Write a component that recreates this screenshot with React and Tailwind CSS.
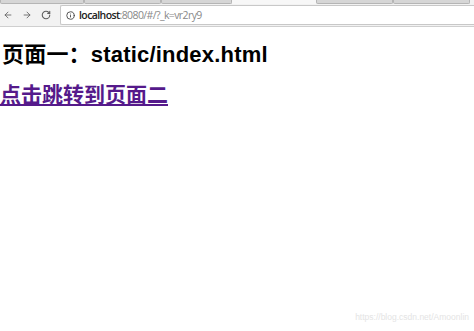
import { ArrowLeft, ArrowRight, RotateCw, Info } from "lucide-react"

const tabs = [
  { w: "w-[84px]", active: false },
  { w: "w-[77px]", active: false },
  { w: "w-[71px]", active: false },
  { w: "w-[84px]", active: true },
  { w: "w-[77px]", active: false },
  { w: "w-[77px]", active: false },
]

const App = () => {
  return (
    <div className="w-[474px] h-[331px] bg-white overflow-hidden relative font-['Liberation_Sans','Noto_Sans_CJK_SC',sans-serif]">
      {/* tab strip */}
      <div className="flex h-[4px] bg-[#f2f2f2]">
        {tabs.map((t, i) => (
          <div
            key={i}
            className={
              t.active
                ? `${t.w} shrink-0 bg-[#f7f7f7]`
                : `${t.w} shrink-0 bg-[#d6d6d6] border-x border-b border-[#b5b5b5] rounded-b-[2px]`
            }
          />
        ))}
      </div>

      {/* toolbar */}
      <div className="flex items-center h-[23px] bg-[#f2f2f2] border-b border-[#cfcfcf]">
        <div className="flex items-center gap-[9px] pl-[3px] text-[#5e5e5e]">
          <ArrowLeft className="w-[10px] h-[10px]" strokeWidth={2} />
          <ArrowRight className="w-[10px] h-[10px]" strokeWidth={2} />
          <RotateCw className="w-[10px] h-[10px]" strokeWidth={2.6} />
        </div>
        <div className="ml-[9px] flex-1 h-[20px] bg-white border border-[#c8c8c8] border-r-0 rounded-l-[2px] flex items-center pl-[5px] gap-[4px]">
          <Info className="w-[9px] h-[9px] text-[#444]" strokeWidth={2.4} />
          <span className="text-[10.5px] leading-none font-['Open_Sans',sans-serif] tracking-[-0.6px]">
            <span className="text-[#222] font-semibold">localhost</span>
            <span className="text-[#888]">:8080/#/?_k=vr2ry9</span>
          </span>
        </div>
      </div>

      {/* page content */}
      <div className="pl-[2px] pt-[12px]">
        <h2 className="text-[22px] font-bold text-black leading-[32px] tracking-[0.2px]">
          页面一：static/index.html
        </h2>
        <a
          href="#"
          className="block -ml-[2px] mt-[10px] text-[21px] font-bold text-[#551a8b] underline leading-[28px]"
        >
          点击跳转到页面二
        </a>
      </div>

      {/* watermark */}
      <div className="absolute right-[5px] bottom-[7px] text-[8.5px] text-[#e4e4e4]">
        https://blog.csdn.net/Amoonlin
      </div>
    </div>
  )
}

export default App
